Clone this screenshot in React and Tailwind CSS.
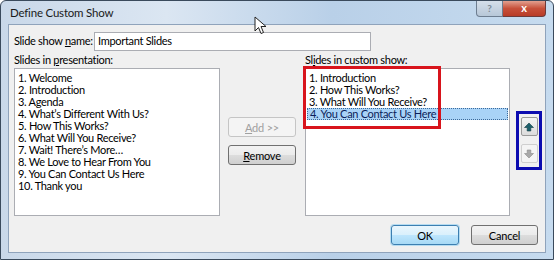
import React from "react";

const font = { fontFamily: 'Lato, "Noto Sans", sans-serif' };

const presentation = [
  "1. Welcome",
  "2. Introduction",
  "3. Agenda",
  "4. What’s Different With Us?",
  "5. How This Works?",
  "6. What Will You Receive?",
  "7. Wait! There’s More…",
  "8. We Love to Hear From You",
  "9. You Can Contact Us Here",
  "10. Thank you",
];

const custom = [
  "1. Introduction",
  "2. How This Works?",
  "3. What Will You Receive?",
  "4. You Can Contact Us Here",
];

function WinButton({ children, disabled, primary, className = "" }) {
  return (
    <div
      className={`flex items-center justify-center rounded-[3px] border text-[11px] leading-none tracking-[-0.2px] ${
        disabled
          ? "border-[#c5c5c5] bg-[#f4f4f4] text-[#a0a0a0]"
          : primary
          ? "border-[#3c7fb1] bg-[linear-gradient(#eaf6fd,#d9f0fc_50%,#bee6fd_50%,#a7d9f5)] text-black shadow-[0_0_0_1px_#b6dcf1]"
          : "border-[#707070] bg-[linear-gradient(#f2f2f2,#ebebeb_50%,#dddddd_50%,#cfcfcf)] text-black"
      } ${className}`}
    >
      {children}
    </div>
  );
}

function Cursor() {
  return (
    <svg className="absolute left-[253px] top-[15px]" width="14" height="19" viewBox="0 0 14 19">
      <path
        d="M1 1 L1 15 L4.5 11.5 L7 17.5 L9.5 16.5 L7 10.5 L12 10.5 Z"
        fill="#fff"
        stroke="#222"
        strokeWidth="1"
        strokeLinejoin="round"
      />
    </svg>
  );
}

export default function App() {
  return (
    <div
      className="relative flex h-[260px] w-[554px] flex-col overflow-hidden rounded-t-[6px] border border-[#3a4a5c] bg-[linear-gradient(90deg,#c9d8e9,#dbe6f2_30%,#b9d0e8_60%,#c6dbef)] text-black"
      style={font}
    >
      {/* Title bar */}
      <div className="flex h-[23px] shrink-0 items-center justify-between pl-[9px]">
        <span className="text-[11.5px] tracking-[-0.2px] text-[#1a1a1a]">Define Custom Show</span>
        <div className="mr-[7px] flex self-start">
          <div className="flex h-[16px] w-[27px] items-center justify-center rounded-bl-[4px] border border-t-0 border-[#6d7d90] bg-[linear-gradient(#d5dfea,#b7c7d8)] text-[10px] font-bold text-[#7d8a98]">
            ?
          </div>
          <div className="flex h-[16px] w-[43px] items-center justify-center rounded-br-[4px] border border-l-0 border-t-0 border-[#6d3a3a] bg-[linear-gradient(#e3a08f,#c7503a_50%,#b83c28)] text-[11px] font-bold text-white">
            x
          </div>
        </div>
      </div>

      {/* Client area */}
      <div className="mx-[7px] flex h-[229px] shrink-0 flex-col border border-[#8fa3bb] bg-[#f0f0f0] pl-[5px] text-[11px] tracking-[-0.3px]">
        <div className="mt-[7px] flex h-[19px] items-center">
          <span className="w-[80px] whitespace-nowrap">
            Slide show <u>n</u>ame:
          </span>
          <div className="flex h-[19px] w-[277px] items-center whitespace-nowrap border border-[#abadb3] bg-white pl-[3px]">
            Important Slides
          </div>
        </div>

        <div className="mt-[1px] flex">
          {/* Left list */}
          <div className="flex w-[206px] flex-col">
            <span className="h-[15px] whitespace-nowrap leading-[15px]">
              Slides in <u>p</u>resentation:
            </span>
            <div className="mt-[1px] h-[148px] border border-[#abadb3] bg-white pl-[3px] pt-[3px] leading-[12px]">
              {presentation.map((s) => (
                <div key={s} className="h-[12px] whitespace-nowrap">
                  {s}
                </div>
              ))}
            </div>
          </div>

          {/* Middle buttons */}
          <div className="ml-[8px] flex w-[68px] flex-col gap-[8px] pt-[65px]">
            <WinButton disabled className="h-[20px]">
              <span>
                <u>A</u>dd &gt;&gt;
              </span>
            </WinButton>
            <WinButton className="h-[20px]">
              <span>
                <u>R</u>emove
              </span>
            </WinButton>
          </div>

          {/* Right list */}
          <div className="ml-[9px] flex w-[205px] flex-col">
            <span className="h-[15px] whitespace-nowrap leading-[15px]">
              Sl<u>i</u>des in custom show:
            </span>
            <div className="relative mt-[1px] h-[148px] border border-[#abadb3] bg-white px-[1px] pt-[3px] leading-[12px]">
              {custom.map((s, i) => (
                <div
                  key={s}
                  className={`h-[12px] whitespace-nowrap pl-[2px] ${
                    i === 3 ? "border border-dotted border-[#3d6a9a] bg-[#a9d3f7] leading-[10px] text-[#0b1f5a]" : ""
                  }`}
                >
                  {s}
                </div>
              ))}
              <div className="absolute left-[-3px] top-[-3px] h-[63px] w-[138px] border-[3px] border-[#d8141c]" />
            </div>
          </div>

          {/* Up / down buttons */}
          <div className="ml-[6px] mt-[59px] flex h-[59px] w-[26px] flex-col items-center gap-[8px] border-[3px] border-[#0c0cb0] pt-[3px]">
            <div className="flex h-[19px] w-[17px] items-center justify-center rounded-[2px] border border-[#9a9a9a] bg-[linear-gradient(#f4f4f4,#dcdcdc)]">
              <svg width="10" height="10" viewBox="0 0 10 10">
                <path d="M5 1 L9.5 5.5 L6.8 5.5 L6.8 9 L3.2 9 L3.2 5.5 L0.5 5.5 Z" fill="#1d5f6b" stroke="#0f3a42" strokeWidth="0.6" />
              </svg>
            </div>
            <div className="flex h-[19px] w-[17px] items-center justify-center rounded-[2px] border border-[#cfcfcf] bg-[#f4f4f4]">
              <svg width="10" height="10" viewBox="0 0 10 10">
                <path d="M5 9 L9.5 4.5 L6.8 4.5 L6.8 1 L3.2 1 L3.2 4.5 L0.5 4.5 Z" fill="#a8a8a8" stroke="#8c8c8c" strokeWidth="0.6" />
              </svg>
            </div>
          </div>
        </div>

        <div className="ml-[377px] mt-[9px] flex gap-[12px]">
          <WinButton primary className="h-[20px] w-[68px]">
            OK
          </WinButton>
          <WinButton className="h-[20px] w-[67px]">Cancel</WinButton>
        </div>
      </div>

      <Cursor />
    </div>
  );
}
